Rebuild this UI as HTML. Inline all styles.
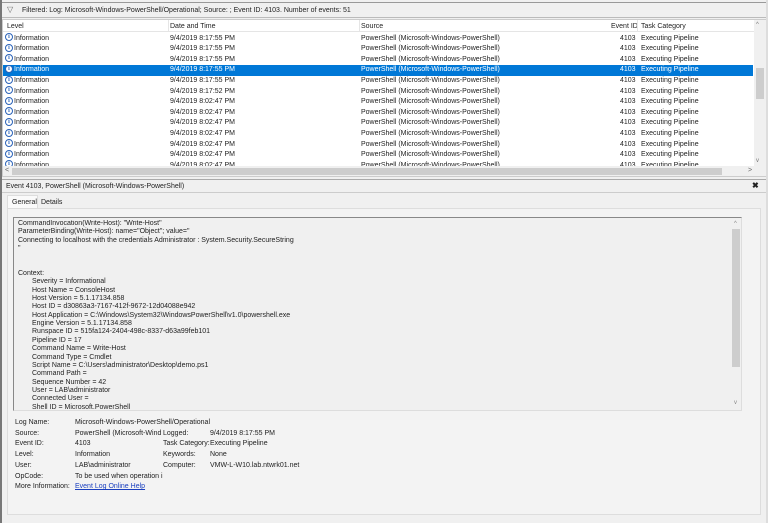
<!DOCTYPE html>
<html><head><style>
*{margin:0;padding:0;box-sizing:border-box}
body{width:768px;height:523px;overflow:hidden;background:#f0f0f0;font-family:"Liberation Sans",sans-serif;font-size:7px;color:#222;position:relative}
.a{position:absolute;white-space:nowrap}
.row{position:absolute;left:3px;width:750px;height:10.6px;line-height:10.6px;white-space:nowrap}
.row>span{position:absolute}
.sel{background:#0078d7;color:#fff}
.ic{display:inline-block;width:8px;height:8px;border:1px solid #2a62b8;border-radius:50%;font-size:6px;line-height:6px;text-align:center;color:#2a62b8;font-family:"Liberation Serif",serif;font-weight:bold;vertical-align:middle;margin-top:-1px;margin-right:1px;background:#fff}
.txt div{height:8.35px;line-height:8.35px}
.ind{padding-left:14px}
.d{position:absolute;line-height:10.7px;white-space:nowrap}
</style></head><body>
<div class="a" style="left:0;top:0;width:2px;height:523px;background:#777"></div>
<div class="a" style="left:2px;top:2px;width:766px;height:1px;background:#999"></div>
<div class="a" style="left:2px;top:3px;width:766px;height:15px;background:#f0f0f0;border-bottom:1px solid #bbb"></div>
<div class="a" style="left:7px;top:5px;font-size:8px;color:#666">&#x25BD;</div>
<div class="a" style="left:22px;top:7px">Filtered: Log: Microsoft-Windows-PowerShell/Operational; Source: ; Event ID: 4103. Number of events: 51</div>
<!-- list -->
<div class="a" style="left:2px;top:19px;width:764px;height:158px;background:#fff;border:1px solid #ccc"></div>
<div class="a" style="left:3px;top:20px;width:751px;height:12px;border-bottom:1px solid #e5e5e5"></div>
<div class="a" style="left:7px;top:23px">Level</div>
<div class="a" style="left:168px;top:20px;width:1px;height:12px;background:#e5e5e5"></div>
<div class="a" style="left:170px;top:23px">Date and Time</div>
<div class="a" style="left:359px;top:20px;width:1px;height:12px;background:#e5e5e5"></div>
<div class="a" style="left:361px;top:23px">Source</div>
<div class="a" style="left:611px;top:23px">Event ID</div>
<div class="a" style="left:637px;top:20px;width:1px;height:12px;background:#e5e5e5"></div>
<div class="a" style="left:641px;top:23px">Task Category</div>
<div id="rows"></div>
<div class="a" style="left:754px;top:20px;width:12px;height:146px;background:#f0f0f0"></div>
<div class="a" style="left:756px;top:22px;font-size:6px;color:#777">^</div>
<div class="a" style="left:756px;top:68px;width:8px;height:31px;background:#cdcdcd"></div>
<div class="a" style="left:756px;top:158px;font-size:6px;color:#777">v</div>
<div class="a" style="left:3px;top:166px;width:763px;height:10px;background:#f0f0f0"></div>
<div class="a" style="left:5px;top:167px;font-size:7px;color:#666">&lt;</div>
<div class="a" style="left:12px;top:168px;width:710px;height:7px;background:#cdcdcd"></div>
<div class="a" style="left:748px;top:167px;font-size:7px;color:#666">&gt;</div>
<!-- event header -->
<div class="a" style="left:2px;top:179px;width:766px;height:1px;background:#aaa"></div>
<div class="a" style="left:6px;top:183px">Event 4103, PowerShell (Microsoft-Windows-PowerShell)</div>
<div class="a" style="left:752px;top:181px;font-size:8px;font-weight:bold">&#x2716;</div>
<div class="a" style="left:2px;top:192px;width:766px;height:1px;background:#ccc"></div>
<div class="a" style="left:7px;top:195px;width:31px;height:14px;background:#fafafa;border:1px solid #ddd;border-bottom:none"></div>
<div class="a" style="left:12px;top:199px">General</div>
<div class="a" style="left:41px;top:199px">Details</div>
<div class="a" style="left:7px;top:208px;width:754px;height:307px;border:1px solid #ddd;background:#f3f3f3"></div>
<!-- text box -->
<div class="a" style="left:13px;top:217px;width:729px;height:194px;border:1px solid #888;border-right-color:#ddd;border-bottom-color:#ddd;background:#f0f0f0"></div>
<div class="a" style="left:731px;top:218px;width:10px;height:192px;background:#f0f0f0"></div>
<div class="a" style="left:734px;top:221px;font-size:6px;color:#888">^</div>
<div class="a" style="left:732px;top:229px;width:8px;height:138px;background:#cdcdcd"></div>
<div class="a" style="left:734px;top:400px;font-size:6px;color:#888">v</div>
<div class="a txt" style="left:18px;top:220px;width:710px;height:190px;overflow:hidden">
<div>CommandInvocation(Write-Host): "Write-Host"</div>
<div>ParameterBinding(Write-Host): name="Object"; value="</div>
<div>Connecting to localhost with the credentials Administrator : System.Security.SecureString</div>
<div>"</div><div></div><div></div>
<div>Context:</div>
<div class="ind">Severity = Informational</div>
<div class="ind">Host Name = ConsoleHost</div>
<div class="ind">Host Version = 5.1.17134.858</div>
<div class="ind">Host ID = d30863a3-7167-412f-9672-12d04088e942</div>
<div class="ind">Host Application = C:\Windows\System32\WindowsPowerShell\v1.0\powershell.exe</div>
<div class="ind">Engine Version = 5.1.17134.858</div>
<div class="ind">Runspace ID = 515fa124-2404-498c-8337-d63a99feb101</div>
<div class="ind">Pipeline ID = 17</div>
<div class="ind">Command Name = Write-Host</div>
<div class="ind">Command Type = Cmdlet</div>
<div class="ind">Script Name = C:\Users\administrator\Desktop\demo.ps1</div>
<div class="ind">Command Path =</div>
<div class="ind">Sequence Number = 42</div>
<div class="ind">User = LAB\administrator</div>
<div class="ind">Connected User =</div>
<div class="ind">Shell ID = Microsoft.PowerShell</div>
</div>
<!-- details -->
<div class="d" style="left:15px;top:418px">Log Name:<br>Source:<br>Event ID:<br>Level:<br>User:<br>OpCode:<br>More Information:</div>
<div class="d" style="left:75px;top:418px">Microsoft-Windows-PowerShell/Operational<br>PowerShell (Microsoft-Wind<br>4103<br>Information<br>LAB\administrator<br>To be used when operation i<br><span style="color:#1a3fbf;text-decoration:underline">Event Log Online Help</span></div>
<div class="d" style="left:163px;top:428.7px">Logged:<br>Task Category:<br>Keywords:<br>Computer:</div>
<div class="d" style="left:210px;top:428.7px">9/4/2019 8:17:55 PM<br>Executing Pipeline<br>None<br>VMW-L-W10.lab.ntwrk01.net</div>
<div class="a" style="left:766px;top:0;width:2px;height:523px;background:#ddd"></div>
<script>
var t=["8:17:55","8:17:55","8:17:55","8:17:55","8:17:55","8:17:52","8:02:47","8:02:47","8:02:47","8:02:47","8:02:47","8:02:47","8:02:47"],h="";
for(var i=0;i<13;i++){h+='<div class="row'+(i==3?' sel':'')+'" style="top:'+(33.5+i*10.6)+'px"><span style="left:2px"><span class="ic">i</span>Information</span><span style="left:167px">9/4/2019 '+t[i]+' PM</span><span style="left:358px">PowerShell (Microsoft-Windows-PowerShell)</span><span style="left:617px">4103</span><span style="left:638px">Executing Pipeline</span></div>';}
document.getElementById("rows").innerHTML=h;
</script>
</body></html>
